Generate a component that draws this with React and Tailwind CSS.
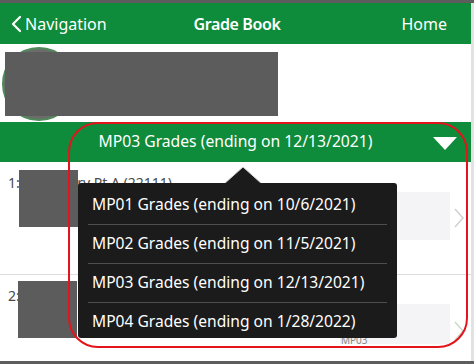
import React from "react";

const items = [
  "MP01 Grades (ending on 10/6/2021)",
  "MP02 Grades (ending on 11/5/2021)",
  "MP03 Grades (ending on 12/13/2021)",
  "MP04 Grades (ending on 1/28/2022)",
];

function Chevron({ className }) {
  return (
    <svg width="10" height="20" viewBox="0 0 10 20" className={className}>
      <path d="M1 1 L9 10 L1 19" fill="none" stroke="currentColor" strokeWidth="1.4" />
    </svg>
  );
}

export default function App() {
  return (
    <div
      className="relative w-[474px] h-[364px] overflow-hidden bg-white flex flex-col"
      style={{ fontFamily: '"Noto Sans", "Open Sans", sans-serif' }}
    >
      <div className="h-[3px] bg-[#5d5d5d] shrink-0" />
      <div className="flex flex-1 min-h-0">
        <div className="flex-1 flex flex-col">
          {/* Header */}
          <div className="h-[41px] bg-[#0e8b3b] flex items-center text-white text-[16px] pl-[11px] pr-[24px]">
            <div className="flex-1 flex items-center gap-[3px]">
              <svg width="11" height="18" viewBox="0 0 11 18">
                <path d="M9 2 L2 9 L9 16" fill="none" stroke="white" strokeWidth="2.2" strokeLinecap="round" strokeLinejoin="round" />
              </svg>
              <span>Navigation</span>
            </div>
            <div className="text-center font-semibold text-[16px] tracking-[-0.4px] pl-[16px]">Grade Book</div>
            <div className="flex-1 text-right">Home</div>
          </div>
          {/* Profile area */}
          <div className="h-[78px] relative bg-white">
            <div className="absolute left-[2px] top-[3px] w-[74px] h-[74px] rounded-full bg-[#6a6d6a] border-2 border-[#4e8a5a]" />
            <div className="absolute left-[5px] top-[8px] w-[273px] h-[64px] bg-[#5c5c5c]" />
          </div>
          {/* Green selector */}
          <div className="h-[40px] bg-[#0e8b3b] flex items-center justify-center relative text-white text-[15.7px]">
            <span>MP03 Grades (ending on 12/13/2021)</span>
            <svg className="absolute right-[14px] top-[15px]" width="24" height="13" viewBox="0 0 24 13">
              <path d="M0 0 L24 0 L12 13 Z" fill="white" />
            </svg>
          </div>
          {/* Row 1 */}
          <div className="h-[113px] border-b border-[#dcdcdc] relative">
            <div className="pt-[10px] pl-[8px] text-[14px] text-[#4a4a4a]">1: Chemistry Pt A (22111)</div>
            <div className="absolute left-[19px] top-[8px] w-[59px] h-[57px] bg-[#5c5c5c]" />
            <div className="absolute left-[340px] top-[30px] w-[110px] h-[48px] bg-[#f4f4f6]" />
            <Chevron className="absolute right-[7px] top-[46px] text-[#cfcfcf]" />
          </div>
          {/* Row 2 */}
          <div className="flex-1 relative">
            <div className="pt-[10px] pl-[8px] text-[14px] text-[#4a4a4a]">2:</div>
            <div className="absolute left-[18px] top-[6px] w-[59px] h-[57px] bg-[#5c5c5c]" />
            <div className="absolute left-[340px] top-[29px] w-[110px] h-[40px] bg-[#f4f4f6]" />
            <div className="absolute left-[341px] top-[58px] text-[10px] text-[#888]">MP03</div>
            <Chevron className="absolute right-[7px] top-[46px] text-[#c8d8c8]" />
          </div>
        </div>
        <div className="w-[3px] bg-[#e2e2e2]" />
      </div>
      <div className="h-[3px] bg-[#5d5d5d] shrink-0" />

      {/* Popup arrow */}
      <svg className="absolute left-[222px] top-[166px]" width="42" height="19" viewBox="0 0 42 19">
        <path d="M2 18 L21 1 L40 18" fill="#1b1b1b" stroke="#cfcfcf" strokeWidth="1" />
        <rect x="0" y="17" width="42" height="2" fill="#1b1b1b" />
      </svg>
      {/* Popup */}
      <div className="absolute left-[78px] top-[183px] w-[319px] h-[155px] bg-[#1b1b1b] rounded-[3px] pt-[3px] text-white text-[15.6px]">
        {items.map((t, i) => (
          <div key={t} className="mx-[10px]">
            <div className="h-[38px] flex items-center pl-[4px]">{t}</div>
            {i < items.length - 1 && <div className="h-px bg-[#4e4e4e]" />}
          </div>
        ))}
      </div>

      {/* Red highlight */}
      <div className="absolute left-[68px] top-[122px] w-[400px] h-[226px] border-2 border-[#e3141c] rounded-[30px]" />
    </div>
  );
}
